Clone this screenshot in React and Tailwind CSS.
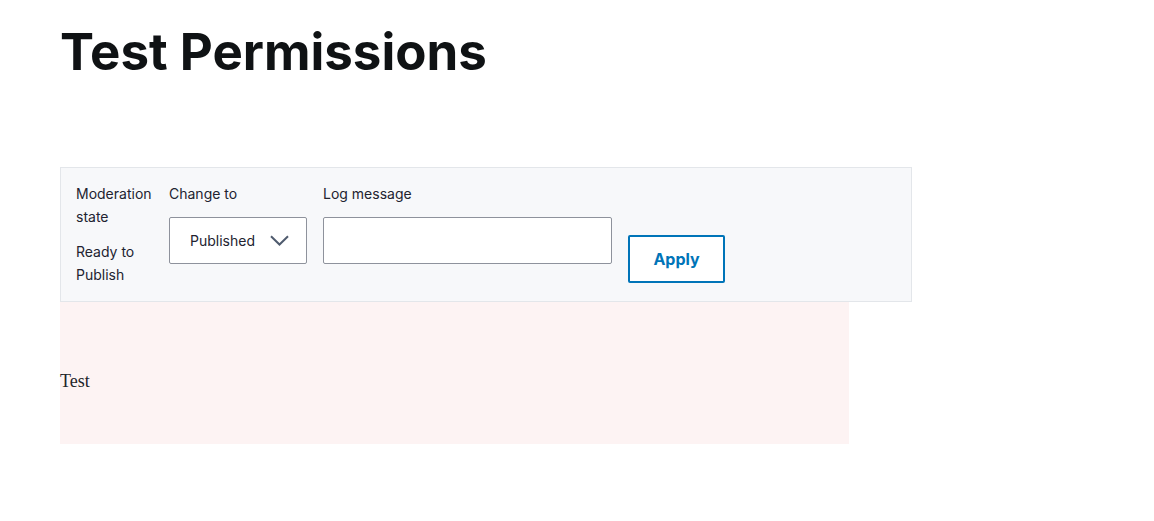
import React from "react";

export default function App() {
  return (
    <div className="min-h-screen bg-white px-[60px] pt-[21px] text-[#222330]" style={{ fontFamily: "Inter, 'Noto Sans', sans-serif" }}>
      <h1 className="m-0 text-[51px] font-bold leading-[62px] text-[#0f1214]">Test Permissions</h1>

      <div className="mt-[84px] flex w-[852px] gap-4 border border-[#e3e6ea] bg-[#f7f8fa] pb-[15px] pl-[15px] pt-[14px] text-[14px] leading-[23px]">
        <div className="w-[77px]">
          <div>Moderation state</div>
          <div className="mt-3">Ready to Publish</div>
        </div>

        <div>
          <div>Change to</div>
          <div className="mt-3 flex h-[47px] w-[138px] items-center justify-between rounded-[2px] border border-[#8e929c] bg-white pl-5 pr-[17px]">
            <span>Published</span>
            <svg width="19" height="11" viewBox="0 0 19 11" fill="none">
              <path d="M1 1.2l8.5 8.3 8.5-8.3" stroke="#4f5b6e" strokeWidth="2" />
            </svg>
          </div>
        </div>

        <div>
          <div>Log message</div>
          <div className="mt-3 h-[47px] w-[289px] rounded-[2px] border border-[#8e929c] bg-white"></div>
        </div>

        <div className="pt-[53px]">
          <button className="flex h-[48px] w-[97px] items-center justify-center rounded-[2px] border-2 border-[#0074b8] bg-white text-[16px] font-bold text-[#0074b8]">
            Apply
          </button>
        </div>
      </div>

      <div className="h-[142px] w-[789px] bg-[#fdf3f3] pt-[66px] text-[18px] leading-[27px] text-[#232429]" style={{ fontFamily: "'Liberation Serif', serif" }}>
        Test
      </div>
    </div>
  );
}
